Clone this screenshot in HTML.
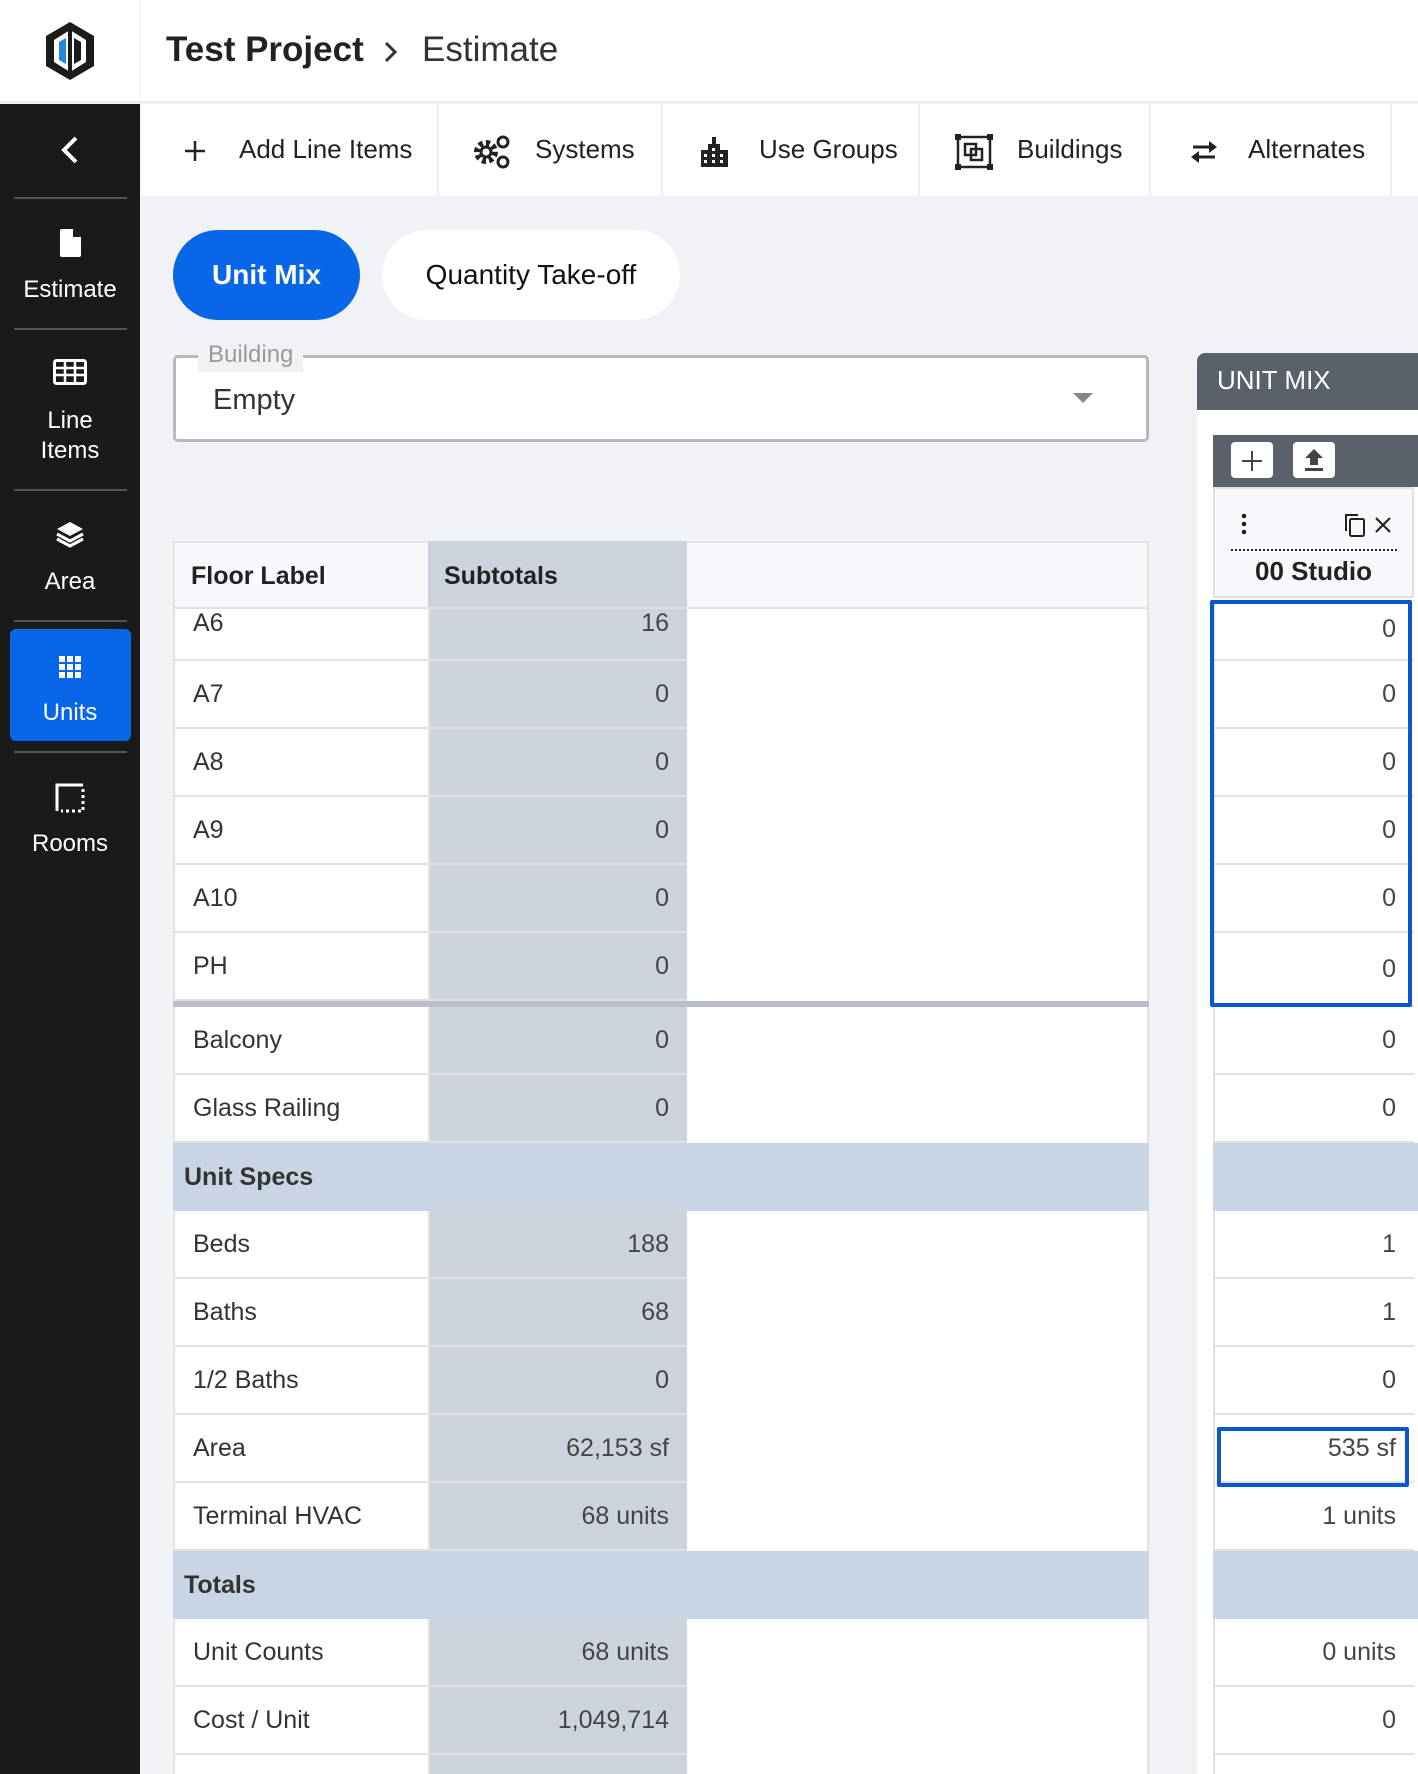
<!DOCTYPE html>
<html style="width:1418px;height:1774px;overflow:hidden"><head><meta charset="utf-8"><style>
*{box-sizing:border-box;margin:0;padding:0}
body{width:1418px;height:1774px;overflow:hidden;background:#f0f2f5;font-family:"Liberation Sans",Roboto,sans-serif;position:relative;color:#222}
.a{position:absolute}
.sb{left:0;top:104px;width:140px;height:1670px;background:#1a1a1a}
.div{position:absolute;left:14px;width:113px;height:2px;background:#555}
.sl{position:absolute;left:0;width:140px;text-align:center;color:#fff;font-size:24px;line-height:30px}
.sep{position:absolute;top:104px;width:2px;height:92px;background:#eee}
.c{position:absolute;font-size:25px;display:flex;align-items:center}
.lab{left:173px;width:255px;background:#fff;padding-left:18px;color:#333;border-bottom:2px solid #e2e2e2;border-left:2px solid #e2e2e2}
.sub{left:428px;width:259px;background:#cdd3dd;justify-content:flex-end;padding-right:18px;color:#444;border-bottom:2px solid #e2e2e2;border-left:2px solid #e2e2e2}
.rv{left:1213px;width:201px;background:#fff;justify-content:flex-end;padding-right:18px;color:#444;border-bottom:2px solid #e2e2e2;border-left:2px solid #e2e2e2}
.sec{left:173px;width:976px;background:#c9d5e4;font-weight:bold;padding-left:11px;color:#333}
.rsec{left:1213px;width:205px;background:#c9d5e4}
.t{font-size:26px}
</style></head><body>
<div class="a" style="left:0;top:0;width:1418px;height:103px;background:#fff;border-bottom:2px solid #eceef2"></div>
<div class="a" style="left:140px;top:0;width:1px;height:103px;background:#eee"></div>
<svg class="a" style="left:42px;top:20px" width="56" height="62" viewBox="0 0 56 62"><path d="M28 2 L52 16 L52 46 L28 60 L4 46 L4 16 Z" fill="#1b1b1b"/><path d="M28 10 L44 20 L44 42 L28 52 L12 42 L12 20 Z" fill="#fff"/><path d="M17 22 L24 18 L24 44 L17 40Z" fill="#1e88e5"/><path d="M32 18 L39 22 L39 40 L32 44Z" fill="#1b1b1b"/><rect x="26" y="8" width="4" height="46" fill="#1b1b1b"/></svg>
<div class="a" style="left:166px;top:30px;font-size:35px;font-weight:bold;color:#222">Test Project</div>
<svg class="a" style="left:382px;top:40px" width="18" height="24" viewBox="0 0 18 24"><path d="M4 3 L13 12 L4 21" stroke="#333" stroke-width="3" fill="none"/></svg>
<div class="a" style="left:422px;top:30px;font-size:35px;color:#333">Estimate</div>
<div class="a sb"></div>
<svg class="a" style="left:58px;top:135px" width="24" height="30" viewBox="0 0 24 30"><path d="M18 3 L6 15 L18 27" stroke="#fff" stroke-width="4" fill="none"/></svg>
<div class="div" style="top:197px"></div>
<svg class="a" style="left:58px;top:228px" width="24" height="30" viewBox="0 0 24 30"><path d="M2 3 Q2 1 4 1 L15 1 L23 9 L23 27 Q23 29 21 29 L4 29 Q2 29 2 27Z" fill="#fff"/><path d="M15 1 L15 9 L23 9" fill="#1a1a1a"/></svg>
<div class="sl" style="top:275px">Estimate</div>
<div class="div" style="top:328px"></div>
<svg class="a" style="left:53px;top:359px" width="34" height="26" viewBox="0 0 34 26"><rect x="1.5" y="1.5" width="31" height="23" rx="2" fill="none" stroke="#fff" stroke-width="3"/><path d="M1 9H33M1 16H33M12 1V25M22 1V25" stroke="#fff" stroke-width="2.5"/></svg>
<div class="sl" style="top:406px">Line<br>Items</div>
<div class="div" style="top:489px"></div>
<svg class="a" style="left:55px;top:520px" width="30" height="28" viewBox="0 0 30 28"><path d="M15 2 L28 9 L15 16 L2 9Z" fill="#fff"/><path d="M2 14 L15 21 L28 14" stroke="#fff" stroke-width="3" fill="none"/><path d="M2 19 L15 26 L28 19" stroke="#fff" stroke-width="3" fill="none"/></svg>
<div class="sl" style="top:567px">Area</div>
<div class="div" style="top:620px"></div>
<div class="a" style="left:10px;top:629px;width:121px;height:112px;background:#0866e8;border-radius:6px"></div>
<svg class="a" style="left:58px;top:655px" width="24" height="24" viewBox="0 0 24 24" fill="#fff"><rect x="1" y="1" width="6" height="6"/><rect x="9" y="1" width="6" height="6"/><rect x="17" y="1" width="6" height="6"/><rect x="1" y="9" width="6" height="6"/><rect x="9" y="9" width="6" height="6"/><rect x="17" y="9" width="6" height="6"/><rect x="1" y="17" width="6" height="6"/><rect x="9" y="17" width="6" height="6"/><rect x="17" y="17" width="6" height="6"/></svg>
<div class="sl" style="top:698px">Units</div>
<div class="div" style="top:751px"></div>
<svg class="a" style="left:55px;top:783px" width="30" height="30" viewBox="0 0 30 30"><path d="M2 28 V2 H28" stroke="#fff" stroke-width="3" fill="none"/><path d="M28 6V28H6" stroke="#fff" stroke-width="3" stroke-dasharray="3 3" fill="none"/></svg>
<div class="sl" style="top:829px">Rooms</div>
<div class="a" style="left:141px;top:104px;width:1277px;height:92px;background:#fff"></div>
<div class="sep" style="left:437px"></div><div class="sep" style="left:661px"></div><div class="sep" style="left:918px"></div><div class="sep" style="left:1149px"></div><div class="sep" style="left:1390px"></div>
<svg class="a" style="left:183px;top:139px" width="24" height="24" viewBox="0 0 24 24"><path d="M12 2V22M2 12H22" stroke="#222" stroke-width="2.5"/></svg>
<div class="a t" style="left:239px;top:134px">Add Line Items</div>
<svg class="a" style="left:472px;top:134px" width="40" height="36" viewBox="0 0 40 36"><circle cx="14" cy="18" r="9" fill="none" stroke="#222" stroke-width="6" stroke-dasharray="4 3"/><circle cx="14" cy="18" r="5" fill="none" stroke="#222" stroke-width="3"/><circle cx="31" cy="8" r="5" fill="none" stroke="#222" stroke-width="3"/><circle cx="31" cy="28" r="5" fill="none" stroke="#222" stroke-width="3"/></svg>
<div class="a t" style="left:535px;top:134px">Systems</div>
<svg class="a" style="left:700px;top:136px" width="30" height="32" viewBox="0 0 30 32"><path d="M1 31V14H8V8H12V1H16V8H20V14H28V31Z" fill="#222"/><path d="M4 18h3v3H4zM4 24h3v3H4zM12 12h3v3h-3zM12 18h3v3h-3zM12 24h3v3h-3zM20 18h3v3h-3zM20 24h3v3h-3z" fill="#fff"/></svg>
<div class="a t" style="left:759px;top:134px">Use Groups</div>
<svg class="a" style="left:955px;top:134px" width="38" height="36" viewBox="0 0 38 36"><rect x="3" y="3" width="32" height="30" fill="none" stroke="#222" stroke-width="2.5"/><rect x="10" y="10" width="11" height="11" fill="none" stroke="#222" stroke-width="2.5"/><rect x="16" y="15" width="11" height="11" fill="none" stroke="#222" stroke-width="2.5"/><rect x="0" y="0" width="6" height="6" fill="#222"/><rect x="32" y="0" width="6" height="6" fill="#222"/><rect x="0" y="30" width="6" height="6" fill="#222"/><rect x="32" y="30" width="6" height="6" fill="#222"/></svg>
<div class="a t" style="left:1017px;top:134px">Buildings</div>
<svg class="a" style="left:1189px;top:139px" width="30" height="26" viewBox="0 0 30 26"><path d="M4 8H22" stroke="#222" stroke-width="3"/><path d="M20 2L28 8L20 14Z" fill="#222"/><path d="M8 18H26" stroke="#222" stroke-width="3"/><path d="M10 12L2 18L10 24Z" fill="#222"/></svg>
<div class="a t" style="left:1248px;top:134px">Alternates</div>
<div class="a" style="left:173px;top:230px;width:187px;height:90px;border-radius:45px;background:#0866e8;color:#fff;font-size:28px;font-weight:bold;display:flex;align-items:center;justify-content:center">Unit Mix</div>
<div class="a" style="left:382px;top:230px;width:298px;height:90px;border-radius:45px;background:#fff;color:#111;font-size:28px;display:flex;align-items:center;justify-content:center">Quantity Take-off</div>
<div class="a" style="left:173px;top:355px;width:976px;height:87px;background:#fff;border:3px solid #b8b9bc;border-radius:5px"></div>
<div class="a" style="left:198px;top:338px;padding:0 10px;background:#f0f2f5;font-size:24px;color:#999;line-height:34px">Building</div>
<div class="a" style="left:213px;top:384px;font-size:29px;color:#333">Empty</div>
<svg class="a" style="left:1072px;top:391px" width="22" height="14" viewBox="0 0 22 14"><path d="M1 2H21L11 12Z" fill="#888"/></svg>
<div class="a" style="left:173px;top:541px;width:976px;height:68px;background:#f8f9fc;border:2px solid #e2e2e2"></div>
<div class="c" style="left:175px;top:543px;height:66px;padding-left:16px;font-weight:bold;font-size:25px;color:#222">Floor Label</div>
<div class="a" style="left:428px;top:541px;width:259px;height:68px;background:#cdd3dd;border-bottom:2px solid #e2e2e2"></div>
<div class="c" style="left:444px;top:543px;height:66px;font-weight:bold;font-size:25px;color:#222">Subtotals</div>
<div class="a" style="left:687px;top:609px;width:462px;height:1165px;background:#fff;border-right:2px solid #e2e2e2"></div>
<div class="c lab" style="top:609px;height:52px;align-items:flex-start">A6</div><div class="c sub" style="top:609px;height:52px;align-items:flex-start">16</div>
<div class="c lab" style="top:661px;height:68px">A7</div><div class="c sub" style="top:661px;height:68px">0</div>
<div class="c lab" style="top:729px;height:68px">A8</div><div class="c sub" style="top:729px;height:68px">0</div>
<div class="c lab" style="top:797px;height:68px">A9</div><div class="c sub" style="top:797px;height:68px">0</div>
<div class="c lab" style="top:865px;height:68px">A10</div><div class="c sub" style="top:865px;height:68px">0</div>
<div class="c lab" style="top:933px;height:68px">PH</div><div class="c sub" style="top:933px;height:68px">0</div>
<div class="a" style="left:173px;top:1001px;width:976px;height:6px;background:#b9c0cb"></div>
<div class="c lab" style="top:1007px;height:68px">Balcony</div><div class="c sub" style="top:1007px;height:68px">0</div>
<div class="c lab" style="top:1075px;height:68px">Glass Railing</div><div class="c sub" style="top:1075px;height:68px">0</div>
<div class="c sec" style="top:1143px;height:68px">Unit Specs</div>
<div class="c lab" style="top:1211px;height:68px">Beds</div><div class="c sub" style="top:1211px;height:68px">188</div>
<div class="c lab" style="top:1279px;height:68px">Baths</div><div class="c sub" style="top:1279px;height:68px">68</div>
<div class="c lab" style="top:1347px;height:68px">1/2 Baths</div><div class="c sub" style="top:1347px;height:68px">0</div>
<div class="c lab" style="top:1415px;height:68px">Area</div><div class="c sub" style="top:1415px;height:68px">62,153 sf</div>
<div class="c lab" style="top:1483px;height:68px">Terminal HVAC</div><div class="c sub" style="top:1483px;height:68px">68 units</div>
<div class="c sec" style="top:1551px;height:68px">Totals</div>
<div class="c lab" style="top:1619px;height:68px">Unit Counts</div><div class="c sub" style="top:1619px;height:68px">68 units</div>
<div class="c lab" style="top:1687px;height:68px">Cost / Unit</div><div class="c sub" style="top:1687px;height:68px">1,049,714</div>
<div class="a" style="left:173px;top:1755px;width:255px;height:19px;background:#fff;border-left:2px solid #e2e2e2"></div><div class="a" style="left:428px;top:1755px;width:259px;height:19px;background:#cdd3dd;border-left:2px solid #e2e2e2"></div>
<div class="a" style="left:1197px;top:353px;width:221px;height:1421px;background:#fff"></div>
<div class="a" style="left:1197px;top:353px;width:221px;height:57px;background:#5b616b;border-radius:8px 0 0 0;color:#fff;font-size:26px;padding:12px 0 0 20px">UNIT MIX</div>
<div class="a" style="left:1213px;top:435px;width:205px;height:52px;background:#5b616b"></div>
<div class="a" style="left:1231px;top:442px;width:42px;height:36px;background:#fff;border-radius:4px"></div>
<svg class="a" style="left:1240px;top:449px" width="24" height="24" viewBox="0 0 24 24"><path d="M12 2V22M2 12H22" stroke="#444" stroke-width="2"/></svg>
<div class="a" style="left:1293px;top:442px;width:42px;height:36px;background:#fff;border-radius:4px"></div>
<svg class="a" style="left:1302px;top:447px" width="24" height="26" viewBox="0 0 24 26"><path d="M12 2L21 11H16V18H8V11H3Z" fill="#444"/><rect x="3" y="21" width="18" height="3" fill="#444"/></svg>
<div class="a" style="left:1213px;top:487px;width:201px;height:111px;background:#f8f9fc;border:2px solid #e2e2e2"></div>
<svg class="a" style="left:1240px;top:513px" width="8" height="22" viewBox="0 0 8 22" fill="#222"><circle cx="4" cy="3" r="2.3"/><circle cx="4" cy="11" r="2.3"/><circle cx="4" cy="19" r="2.3"/></svg>
<svg class="a" style="left:1343px;top:512px" width="24" height="26" viewBox="0 0 24 26"><path d="M3 19V3H15" stroke="#222" stroke-width="2" fill="none"/><rect x="7" y="7" width="14" height="17" rx="1.5" stroke="#222" stroke-width="2" fill="none"/></svg>
<svg class="a" style="left:1374px;top:516px" width="18" height="18" viewBox="0 0 18 18"><path d="M2 2L16 16M16 2L2 16" stroke="#222" stroke-width="2.2"/></svg>
<div class="a" style="left:1231px;top:549px;width:166px;border-top:2px dotted #222"></div>
<div class="a" style="left:1213px;top:556px;width:201px;text-align:center;font-size:26px;font-weight:bold;color:#222">00 Studio</div>
<div class="c rv" style="top:600px;height:61px">0</div>
<div class="c rv" style="top:661px;height:68px">0</div>
<div class="c rv" style="top:729px;height:68px">0</div>
<div class="c rv" style="top:797px;height:68px">0</div>
<div class="c rv" style="top:865px;height:68px">0</div>
<div class="c rv" style="top:933px;height:74px">0</div>
<div class="c rv" style="top:1007px;height:68px">0</div>
<div class="c rv" style="top:1075px;height:68px">0</div>
<div class="c rsec" style="top:1143px;height:68px"></div>
<div class="c rv" style="top:1211px;height:68px">1</div>
<div class="c rv" style="top:1279px;height:68px">1</div>
<div class="c rv" style="top:1347px;height:68px">0</div>
<div class="c rv" style="top:1415px;height:68px">535 sf</div>
<div class="c rv" style="top:1483px;height:68px">1 units</div>
<div class="c rsec" style="top:1551px;height:68px"></div>
<div class="c rv" style="top:1619px;height:68px">0 units</div>
<div class="c rv" style="top:1687px;height:68px">0</div>
<div class="a" style="left:1213px;top:1755px;width:201px;height:19px;background:#fff;border-left:2px solid #e2e2e2"></div>
<div class="a" style="left:1210px;top:600px;width:202px;height:407px;border:4px solid #0a58d0;border-radius:2px;z-index:5"></div>
<div class="a" style="left:1217px;top:1427px;width:192px;height:60px;border:4px solid #0a58d0;border-radius:2px;z-index:5"></div>
</body></html>
